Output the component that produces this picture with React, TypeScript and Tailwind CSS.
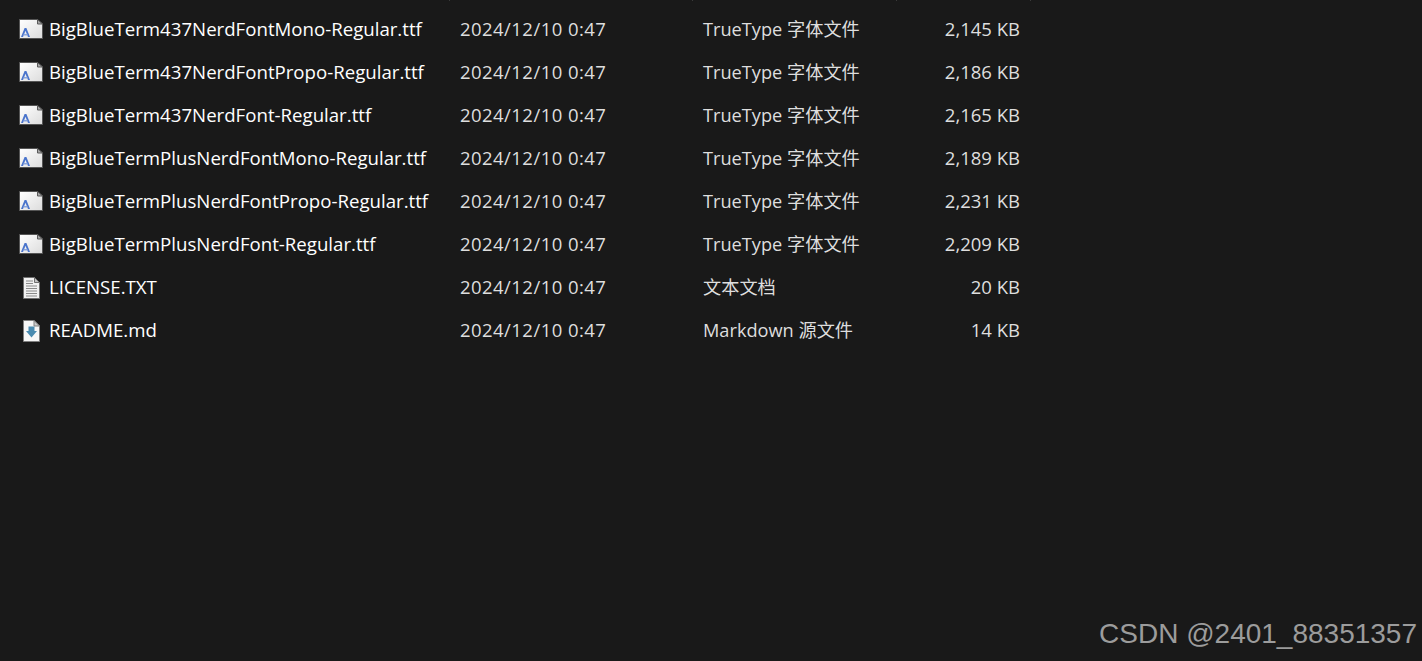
const files = [
  { name: "BigBlueTerm437NerdFontMono-Regular.ttf", type: "TrueType 字体文件", size: "2,145 KB", icon: "font" },
  { name: "BigBlueTerm437NerdFontPropo-Regular.ttf", type: "TrueType 字体文件", size: "2,186 KB", icon: "font" },
  { name: "BigBlueTerm437NerdFont-Regular.ttf", type: "TrueType 字体文件", size: "2,165 KB", icon: "font" },
  { name: "BigBlueTermPlusNerdFontMono-Regular.ttf", type: "TrueType 字体文件", size: "2,189 KB", icon: "font" },
  { name: "BigBlueTermPlusNerdFontPropo-Regular.ttf", type: "TrueType 字体文件", size: "2,231 KB", icon: "font" },
  { name: "BigBlueTermPlusNerdFont-Regular.ttf", type: "TrueType 字体文件", size: "2,209 KB", icon: "font" },
  { name: "LICENSE.TXT", type: "文本文档", size: "20 KB", icon: "text" },
  { name: "README.md", type: "Markdown 源文件", size: "14 KB", icon: "md" },
];

// Wide font file icon, with the small blue "A" in the corner
function FontIcon({ id }: { id: string }) {
  return (
    <svg width="24" height="20" viewBox="0 0 24 20" className="shrink-0">
      <defs>
        <linearGradient id={id} x1="0" y1="0" x2="1" y2="1">
          <stop offset="0" stopColor="#ffffff" />
          <stop offset="1" stopColor="#dcdcdc" />
        </linearGradient>
      </defs>
      <path d="M0.5 0.5H18.5L23.5 5V19.5H0.5Z" fill={`url(#${id})`} stroke="#555555" />
      <path d="M18.5 0.5V5H23.5Z" fill="#a8a8a8" stroke="#5a5a5a" />
      <path d="M2 18L5.6 9H7.4L11 18H9L6.5 11.8L4 18Z" fill="#4a74cc" />
      <path d="M4.5 15H8.5V16.5H4.5Z" fill="#8aa5dc" />
    </svg>
  );
}

function TextIcon() {
  return (
    <svg width="17" height="22" viewBox="0 0 17 22" className="mt-[2px] shrink-0">
      <path d="M0.5 0.5H11.5L16.5 5.5V21.5H0.5Z" fill="#f2f2f2" stroke="#707070" />
      <path d="M11.5 0.5V5.5H16.5Z" fill="#c4c4c4" stroke="#707070" />
      <path
        d="M3 4H10M3 6.5H10M3 9H14M3 11.5H14M3 14H14M3 16.5H14M3 19H14"
        stroke="#8a8a8a"
        strokeWidth="1"
      />
    </svg>
  );
}

function MdIcon() {
  return (
    <svg width="17" height="22" viewBox="0 0 17 22" className="mt-[2px] shrink-0">
      <path d="M0.5 0.5H11L16.5 6V21.5H0.5Z" fill="#f7f7f7" stroke="#808080" />
      <path d="M11 0.5V6H16.5Z" fill="#cccccc" stroke="#808080" />
      <path d="M5.5 6.5H11.5V11H14L8.5 17.5L3 11H5.5Z" fill="#4a8bb0" />
    </svg>
  );
}

export default function App() {
  return (
    <div
      className="relative h-[661px] w-[1422px] overflow-hidden bg-[#191919] text-[#dedede]"
      style={{ fontFamily: '"Open Sans", "Noto Sans CJK SC", sans-serif' }}
    >
      {/* Column separators left over from the header */}
      <div className="grid h-[7px] w-[1031px] grid-cols-[450px_243px_204px_134px] items-start">
        <div className="h-px border-r border-[#3a3a3a]" />
        <div className="h-px border-r border-[#3a3a3a]" />
        <div className="h-px border-r border-[#3a3a3a]" />
        <div className="h-px border-r border-[#3a3a3a]" />
      </div>

      <div className="flex flex-col">
        {files.map((file, i) => (
          <div
            key={file.name}
            className="grid h-[43px] w-[1031px] grid-cols-[450px_243px_204px_134px] items-center leading-[28px]"
          >
            <div className="flex items-center text-[18.65px] text-white">
              <div className="flex w-[49px] justify-center pl-[13px]">
                {file.icon === "font" && <FontIcon id={`font-icon-${i}`} />}
                {file.icon === "text" && <TextIcon />}
                {file.icon === "md" && <MdIcon />}
              </div>
              <span>{file.name}</span>
            </div>
            <div className="pl-[10px] text-[18.5px] tracking-[0.45px]">2024/12/10 0:47</div>
            <div className="pl-[10px] text-[18.2px]">{file.type}</div>
            <div className="pr-[11px] text-right text-[18.5px]">{file.size}</div>
          </div>
        ))}
      </div>

      <div
        className="absolute right-[5px] top-[616px] text-[28px] leading-9 text-[#9c9c9c]"
        style={{ fontFamily: '"Liberation Sans", sans-serif' }}
      >
        CSDN @2401_88351357
      </div>
    </div>
  );
}
